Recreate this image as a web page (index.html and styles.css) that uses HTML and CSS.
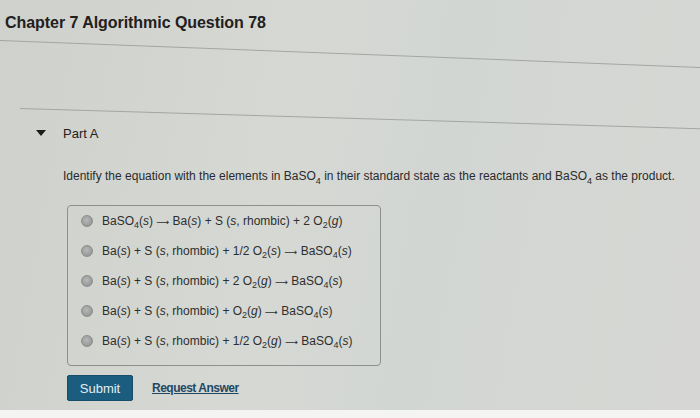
FILE: index.html
```html
<!DOCTYPE html>
<html>
<head>
<meta charset="utf-8">
<link rel="stylesheet" href="styles.css">
</head>
<body>
<div class="page">
  <header class="head">
    <h1 class="title">Chapter 7 Algorithmic Question 78</h1>
  </header>
  <div class="rule rule-top"></div>
  <div class="gap"></div>
  <div class="rule rule-part"></div>
  <section class="part">
    <div class="part-head">
      <span class="caret"></span>
      <span class="part-title">Part A</span>
    </div>
    <p class="question">Identify the equation with the elements in BaSO<sub>4</sub> in their standard state as the reactants and BaSO<sub>4</sub> as the product.</p>
    <div class="choices">
      <label class="choice"><span class="radio"></span><span class="eq">BaSO<sub>4</sub>(<i>s</i>) <span class="arrow">⟶</span> Ba(<i>s</i>) + S (<i>s</i>, rhombic) + 2 O<sub>2</sub>(<i>g</i>)</span></label>
      <label class="choice"><span class="radio"></span><span class="eq">Ba(<i>s</i>) + S (<i>s</i>, rhombic) + 1/2 O<sub>2</sub>(<i>s</i>) <span class="arrow">⟶</span> BaSO<sub>4</sub>(<i>s</i>)</span></label>
      <label class="choice"><span class="radio"></span><span class="eq">Ba(<i>s</i>) + S (<i>s</i>, rhombic) + 2 O<sub>2</sub>(<i>g</i>) <span class="arrow">⟶</span> BaSO<sub>4</sub>(<i>s</i>)</span></label>
      <label class="choice"><span class="radio"></span><span class="eq">Ba(<i>s</i>) + S (<i>s</i>, rhombic) + O<sub>2</sub>(<i>g</i>) <span class="arrow">⟶</span> BaSO<sub>4</sub>(<i>s</i>)</span></label>
      <label class="choice"><span class="radio"></span><span class="eq">Ba(<i>s</i>) + S (<i>s</i>, rhombic) + 1/2 O<sub>2</sub>(<i>g</i>) <span class="arrow">⟶</span> BaSO<sub>4</sub>(<i>s</i>)</span></label>
    </div>
    <div class="actions">
      <button class="submit">Submit</button>
      <a class="request" href="#">Request Answer</a>
    </div>
  </section>
  <div class="bottom"></div>
</div>
</body>
</html>
```

FILE: styles.css
```css
* { box-sizing: border-box; }
html, body { margin: 0; padding: 0; }
body {
  width: 700px;
  height: 418px;
  overflow: hidden;
  background: #d3d5d1;
  font-family: "Liberation Sans", Arial, sans-serif;
  color: #2a2c2c;
}
.page {
  height: 418px;
  display: flex;
  flex-direction: column;
  background: linear-gradient(100deg, #cfd1cd 0%, #d6d8d4 40%, #d2d6d2 60%, #d6d7d4 100%);
}
.head { height: 40px; padding: 14px 0 0 5px; }
.title {
  margin: 0;
  font-size: 16px;
  font-weight: bold;
  color: #1f2020;
  letter-spacing: -0.05px;
}
.rule {
  height: 0;
  border-top: 1px solid #a3a6a3;
  transform-origin: left center;
}
.rule-top { width: 720px; transform: rotate(2.2deg); }
.gap { height: 67px; }
.rule-part { width: 700px; margin-left: 20px; transform: rotate(1.7deg); }
.part { padding-left: 36px; }
.part-head {
  display: flex;
  align-items: center;
  height: 20px;
  margin-top: 14px;
}
.caret {
  width: 0; height: 0;
  border-left: 5px solid transparent;
  border-right: 5px solid transparent;
  border-top: 6px solid #1c1c1c;
  margin-right: 17px;
}
.part-title { font-size: 13px; color: #1f2020; }
.question {
  margin: 25px 0 0 27px;
  font-size: 12px;
  line-height: 16px;
  color: #2a2b2b;
  letter-spacing: 0;
}
.question sub { font-size: 9px; vertical-align: -4px; line-height: 0; }
.choices {
  margin: 21px 0 0 31px;
  width: 314px;
  height: 161px;
  border: 1px solid #8e908d;
  border-radius: 4px;
  padding: 7px 0 0 13px;
  display: flex;
  flex-direction: column;
  gap: 14px;
}
.choice {
  display: flex;
  align-items: center;
  height: 16px;
  font-size: 12px;
  color: #2d2e2e;
}
.radio {
  width: 12px;
  height: 12px;
  border-radius: 50%;
  border: 1px solid #8d8f8e;
  background: radial-gradient(circle at 45% 40%, #b8b8b8 0%, #9c9d9d 60%, #8a8b8b 100%);
  margin-right: 9px;
  flex: none;
}
.eq sub { font-size: 9px; vertical-align: -3px; line-height: 0; }
.eq i { font-style: italic; }
.arrow { font-family: "DejaVu Sans", sans-serif; font-size: 9px; }
.actions {
  display: flex;
  align-items: center;
  margin: 9px 0 0 31px;
  gap: 19px;
}
.submit {
  width: 66px;
  height: 26px;
  background: #1b5d7f;
  border: 1px solid #154d6a;
  border-radius: 2px;
  color: #e6eef2;
  font-family: "Liberation Sans", Arial, sans-serif;
  font-size: 13px;
  padding: 0;
}
.request {
  font-size: 12px;
  font-weight: bold;
  color: #1e4764;
  text-decoration: underline;
  letter-spacing: -0.5px;
}
.bottom { margin-top: auto; height: 8px; background: #f4f4f2; }
```
